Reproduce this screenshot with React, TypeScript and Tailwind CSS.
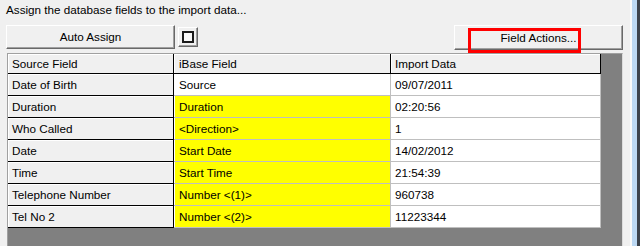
import React from "react";

type Row = [string, string, string, boolean];

const rows: Row[] = [
  ["Date of Birth", "Source", "09/07/2011", false],
  ["Duration", "Duration", "02:20:56", true],
  ["Who Called", "<Direction>", "1", true],
  ["Date", "Start Date", "14/02/2012", true],
  ["Time", "Start Time", "21:54:39", true],
  ["Telephone Number", "Number <(1)>", "960738", true],
  ["Tel No 2", "Number <(2)>", "11223344", true],
];

const btn =
  "flex items-center justify-center bg-[#f0f0f0] border border-t-white border-l-white border-r-[#696969] border-b-[#696969] shadow-[inset_-1px_-1px_0_#a0a0a0]";

export default function App() {
  return (
    <div className="relative flex h-[246px] w-[640px] overflow-hidden bg-[#f0f0f0] font-['Liberation_Sans',Arial,sans-serif] text-[11.7px] leading-[14px] text-black">
      <div className="flex w-[630px] flex-col">
        <div className="h-[25px] pl-[6px] pt-[3px]">Assign the database fields to the import data...</div>
        <div className="flex h-[24px] items-start">
          <div className={`${btn} ml-[6px] h-[24px] w-[169px]`}>Auto Assign</div>
          <div className={`${btn} ml-[3px] mt-[2px] h-[20px] w-[20px]`}>
            <div className="h-[12px] w-[12px] border-2 border-[#1a1a1a] bg-[#f8f8f8]" />
          </div>
          <div className={`${btn} ml-auto mr-[7px] h-[25px] w-[169px]`}>Field Actions...</div>
        </div>
        <div className="ml-[7px] mt-[4px] flex w-[616px] flex-1 flex-col border-l border-t border-r border-l-[#a0a0a0] border-t-[#a0a0a0] border-r-[#dcdcdc] bg-[#808080]">
          <div className="flex h-[20px]">
            <div className="flex w-[166px] items-center border-b border-r border-black bg-[#f0f0f0] pl-[4px] shadow-[inset_1px_1px_0_#fff]">Source Field</div>
            <div className="flex w-[217px] items-center border-b border-r border-black bg-[#f0f0f0] pl-[5px] shadow-[inset_1px_1px_0_#fff]">iBase Field</div>
            <div className="flex w-[210px] items-center border-b border-r border-black bg-[#f0f0f0] pl-[4px] shadow-[inset_1px_1px_0_#fff]">Import Data</div>
          </div>
          {rows.map(([a, b, c, y]) => (
            <div key={a} className="flex h-[22px]">
              <div className="flex w-[166px] items-center border-b border-r border-black bg-[#f0f0f0] pl-[4px] shadow-[inset_1px_1px_0_#fff]">{a}</div>
              <div
                className={`flex w-[217px] items-center border-b border-r border-[#bfbfbf] pl-[5px] shadow-[inset_1px_0_0_#fff] ${
                  y ? "bg-[#ffff00]" : "bg-white"
                }`}
              >
                {b}
              </div>
              <div className="flex w-[210px] items-center border-b border-r border-[#bfbfbf] bg-white pl-[4px]">{c}</div>
            </div>
          ))}
        </div>
      </div>
      <div className="flex w-[10px]">
        <div className="w-[2px] bg-[#fafafa]" />
        <div className="w-[5px] bg-[#bcd8f3]" />
        <div className="w-[3px] bg-[#3c424c]" />
      </div>
      <div className="absolute left-[468px] top-[28px] h-[25px] w-[113px] border-[3px] border-[#ff0000]" />
    </div>
  );
}
